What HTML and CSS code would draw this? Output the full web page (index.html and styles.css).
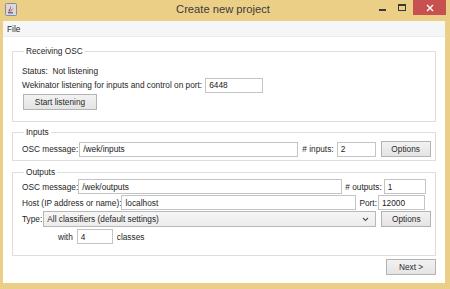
FILE: index.html
```html
<!DOCTYPE html>
<html>
<head>
<meta charset="utf-8">
<link rel="stylesheet" href="styles.css">
</head>
<body>
<div class="frame">
  <div class="titlebar">
    <svg class="appicon" width="12" height="13" viewBox="0 0 12 13">
      <rect x="0.5" y="0.5" width="11" height="12" rx="1" fill="#d9d9e0" stroke="#8a8a9a"/>
      <path d="M3 9 h5 v1.5 h-5z" fill="#5a6fa8"/>
      <path d="M3.5 8.5 q-0.5 -2 1.5 -3 q1 -1 0 -2.5 q2 1 0.5 3 q-1 1 0.5 2.5z" fill="#d0452f"/>
      <path d="M6.5 8 q0 -1.5 1.5 -2.5" stroke="#d0452f" stroke-width="0.8" fill="none"/>
    </svg>
    <div class="title">Create new project</div>
    <div class="controls">
      <span class="min"></span>
      <span class="max"></span>
      <span class="close">
        <svg width="8" height="8" viewBox="0 0 8 8"><path d="M1 1 L7 7 M7 1 L1 7" stroke="#fff" stroke-width="1.4"/></svg>
      </span>
    </div>
  </div>
  <div class="client">
    <div class="menubar"><span class="menu">File</span></div>
    <div class="content">
      <fieldset class="panel p1">
        <legend>Receiving OSC</legend>
        <div class="row">Status:&nbsp; Not listening</div>
        <div class="row r2">
          <span>Wekinator listening for inputs and control on port:</span>
          <span class="field w-port">6448</span>
        </div>
        <div class="row">
          <span class="btn b-start">Start listening</span>
        </div>
      </fieldset>

      <fieldset class="panel p2">
        <legend>Inputs</legend>
        <div class="row">
          <span class="lbl">OSC message:</span>
          <span class="field w-msg-in">/wek/inputs</span>
          <span class="lbl g4">#&nbsp;inputs:</span>
          <span class="field w-num-in">2</span>
          <span class="btn b-opt">Options</span>
        </div>
      </fieldset>

      <fieldset class="panel p3">
        <legend>Outputs</legend>
        <div class="row">
          <span class="lbl">OSC message:</span>
          <span class="field w-msg-out">/wek/outputs</span>
          <span class="lbl g3">#&nbsp;outputs:</span>
          <span class="field w-num-out">1</span>
        </div>
        <div class="row">
          <span class="lbl">Host (IP address or name):</span>
          <span class="field w-host">localhost</span>
          <span class="lbl g3">Port:</span>
          <span class="field w-portout">12000</span>
        </div>
        <div class="row r-type">
          <span class="lbl">Type:</span>
          <span class="combo">
            <span>All classifiers (default settings)</span>
            <svg width="7" height="5" viewBox="0 0 7 5"><path d="M1 1 L3.5 3.5 L6 1" stroke="#555" stroke-width="1.1" fill="none"/></svg>
          </span>
          <span class="btn b-opt">Options</span>
        </div>
        <div class="row r-with">
          <span class="lbl">with</span>
          <span class="field w-classes">4</span>
          <span class="lbl">classes</span>
        </div>
      </fieldset>

      <div class="footer">
        <span class="btn b-next">Next &gt;</span>
      </div>
    </div>
  </div>
</div>
</body>
</html>
```

FILE: styles.css
```css
* { box-sizing: border-box; }
html, body { margin: 0; padding: 0; }
body {
  width: 450px;
  height: 289px;
  overflow: hidden;
  font-family: "Liberation Sans", Arial, sans-serif;
  font-size: 8.3px;
  color: #262626;
}
.frame {
  width: 450px;
  height: 289px;
  background: #eccf87;
  display: flex;
  flex-direction: column;
}
.titlebar {
  height: 21px;
  flex: none;
  display: flex;
  align-items: center;
  position: relative;
}
.appicon { margin-left: 5px; margin-top: -2px; }
.title {
  position: absolute;
  left: 0; right: 0; top: 3px;
  text-align: center;
  font-size: 11.2px;
  color: #3b3b3b;
  padding-right: 4px;
}
.controls {
  margin-left: auto;
  align-self: flex-start;
  display: flex;
  align-items: flex-start;
  margin-right: 4px;
}
.min {
  width: 7px; height: 2px;
  background: #3a3a3a;
  margin-top: 9px;
  margin-right: 12px;
}
.max {
  width: 8px; height: 7px;
  border: 1px solid #3a3a3a;
  border-top-width: 2px;
  margin-top: 4px;
  margin-right: 7px;
}
.close {
  width: 33px; height: 15px;
  background: #c75050;
  display: flex;
  align-items: center;
  justify-content: center;
}
.client {
  flex: 1;
  margin: 0 5px 6px 3px;
  background: #fff;
  display: flex;
  flex-direction: column;
}
.menubar {
  height: 16px;
  flex: none;
  background: #f5f6f7;
  border-bottom: 1px solid #e9ebee;
  display: flex;
  align-items: center;
  padding-left: 4px;
}
.content {
  flex: 1;
  padding: 8px 9px 0 9px;
  display: flex;
  flex-direction: column;
}
.panel {
  margin: 0;
  border: 1px solid #dedede;
  padding: 0 3px 0 9px;
  min-width: 0;
}
.panel legend {
  padding: 0 2px;
  margin-left: 2px;
  line-height: 12px;
  height: 12px;
}
.row {
  display: flex;
  align-items: center;
  white-space: nowrap;
}
.row > * { flex: none; }
.p1 { height: 77px; padding-top: 8px; }
.p1 .row:first-of-type { height: 12px; }
.p1 .r2 { height: 16px; }
.p1 .r2 .field { margin-left: 3px; }
.p1 .btn { margin-top: 1px; margin-left: 1px; }

.p2 { height: 35px; margin-top: 4px; padding-top: 3px; }
.p3 { height: 90px; margin-top: 5px; padding-top: 1px; }
.p3 .row { margin-bottom: 1px; }
.p3 .r-type { margin-bottom: 2px; }
.r-with { padding-left: 36px; }
.r-with .field { margin: 0 4px 0 4px; }

.g3 { margin-left: 3px; }
.g4 { margin-left: 4px; }
.field {
  display: inline-flex;
  align-items: center;
  height: 15px;
  border: 1px solid #c4c4c4;
  background: #fff;
  padding-left: 3px;
  margin-left: 1px;
  color: #222;
}
.btn {
  display: inline-flex;
  align-items: center;
  justify-content: center;
  height: 16px;
  border: 1px solid #b3b3b3;
  background: linear-gradient(#f2f2f2, #e4e4e4);
  color: #2a2a2a;
}
.w-port { width: 58px; }
.w-msg-in { width: 219px; }
.w-num-in { width: 39px; margin-left: 3px; }
.b-start { width: 74px; }
.b-opt { width: 50px; margin-left: 5px; }
.w-msg-out { width: 264px; margin-left: 0; }
.w-num-out { width: 42px; margin-left: 2px; }
.w-host { width: 235px; margin-left: 0; }
.w-portout { width: 47px; }
.w-classes { width: 36px; }
.combo {
  width: 333px;
  height: 16px;
  margin-left: 1px;
  border: 1px solid #b8b8b8;
  background: linear-gradient(#f6f6f6, #ececec);
  display: inline-flex;
  align-items: center;
  justify-content: space-between;
  padding: 0 6px 0 3px;
}
.footer {
  display: flex;
  justify-content: flex-end;
  padding-top: 3px;
  padding-right: 0;
}
.b-next { width: 50px; }
```
